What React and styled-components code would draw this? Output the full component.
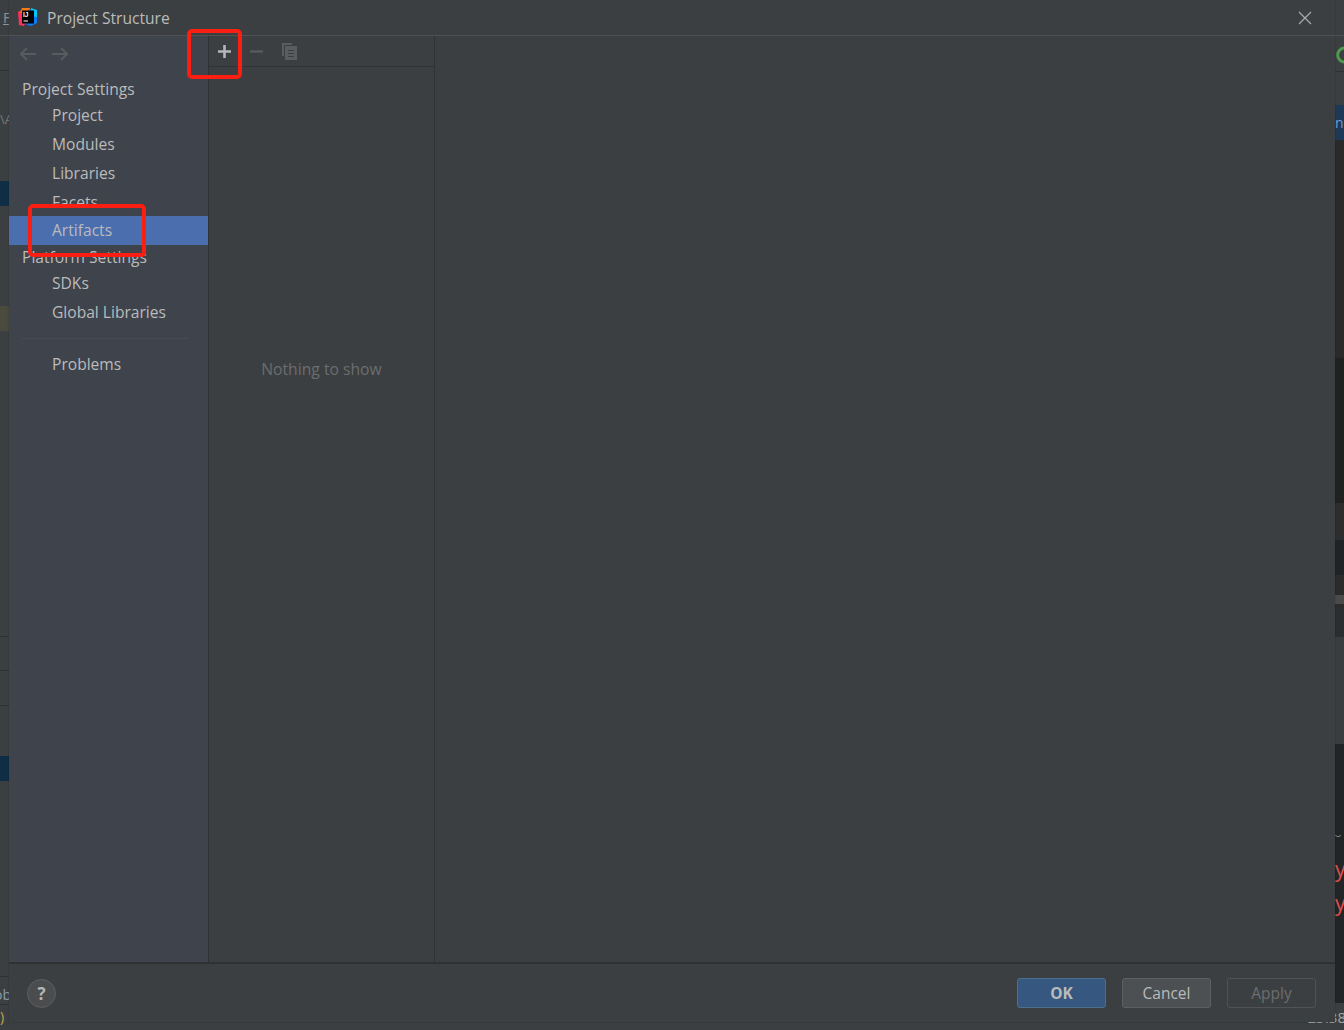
import React from "react";
import styled, { createGlobalStyle } from "styled-components";

const Global = createGlobalStyle`
  html, body { margin: 0; padding: 0; background: #3b3d3f; }
  body { font-family: "Open Sans", "Noto Sans", sans-serif; }
`;

const Page = styled.div`
  position: relative;
  width: 1344px;
  height: 1030px;
  overflow: hidden;
  display: grid;
  grid-template-columns: 9px 1326px 9px;
  grid-template-rows: 1022px 8px;
`;

/* IDE window peeking out round the dialog */
const Strip = styled.div`
  display: flex;
  flex-direction: column;
  overflow: hidden;
  background: #3c3f41;
`;

const Band = styled.div`
  flex: none;
  height: ${(p) => p.$h}px;
  background: ${(p) => p.$bg || "#3c3f41"};
  color: ${(p) => p.$color || "#a9b7c6"};
  font-size: ${(p) => p.$size || 14}px;
  line-height: ${(p) => p.$h}px;
  white-space: nowrap;
  text-indent: ${(p) => p.$indent || 0}px;
  text-decoration: ${(p) => (p.$underline ? "underline" : "none")};
`;

const BottomStrip = styled.div`
  grid-column: 1 / 4;
  position: relative;
  background: #3c3f41;
  overflow: visible;
`;

const Clock = styled.span`
  position: absolute;
  right: -2px;
  bottom: 5px;
  font-size: 15px;
  line-height: 15px;
  color: #a0a4a6;
`;

const BottomParen = styled.span`
  position: absolute;
  left: 0;
  bottom: 6px;
  font-size: 14px;
  line-height: 14px;
  color: #c8a050;
`;

const Dialog = styled.div`
  position: relative;
  z-index: 1;
  display: flex;
  flex-direction: column;
  background: #3c3f41;
  box-shadow: 0 0 2px rgba(0, 0, 0, 0.25);
`;

const TitleBar = styled.div`
  flex: none;
  height: 35px;
  display: flex;
  align-items: center;
  border-bottom: 1px solid #515151;
  color: #bbbbbb;
  font-size: 15.6px;
`;

const Logo = styled.svg`
  margin-left: 8px;
  margin-right: 9px;
  width: 21px;
  height: 21px;
`;

const Close = styled.svg`
  margin-left: auto;
  margin-right: 22px;
  width: 16px;
  height: 16px;
`;

const Body = styled.div`
  flex: 1;
  min-height: 0;
  display: flex;
`;

const Sidebar = styled.div`
  flex: none;
  width: 199px;
  background: #3e434c;
  border-right: 1px solid #323232;
  color: #bbbbbb;
  font-size: 15.6px;
`;

const Nav = styled.div`
  height: 39px;
  display: flex;
  align-items: center;
  gap: 14px;
  padding: 0 0 4px 10px;
  box-sizing: border-box;
`;

const Heading = styled.div`
  height: ${(p) => p.$h}px;
  line-height: ${(p) => p.$h}px;
  padding: ${(p) => p.$top || 0}px 0 0 13px;
  white-space: nowrap;
`;

const Item = styled.div`
  position: relative;
  height: ${(p) => p.$h || 29}px;
  line-height: ${(p) => p.$h || 29}px;
  padding-left: 43px;
  background: ${(p) => (p.$selected ? "#4b6eaf" : "transparent")};
  overflow: visible;
`;

const Divider = styled.div`
  height: 1px;
  margin: 11px 19px 11px 13px;
  background: #474b52;
`;

const ListPane = styled.div`
  flex: none;
  width: 225px;
  display: flex;
  flex-direction: column;
  border-right: 1px solid #323232;
`;

const ListTools = styled.div`
  flex: none;
  height: 31px;
  display: flex;
  align-items: center;
  gap: 17px;
  padding-left: 8px;
  box-sizing: border-box;
  border-bottom: 1px solid #323232;
`;

const Empty = styled.div`
  margin-top: 292px;
  text-align: center;
  color: #6b6d6f;
  font-size: 15.7px;
  line-height: 20px;
`;

const DetailPane = styled.div`
  flex: 1;
`;

const Footer = styled.div`
  flex: none;
  height: 60px;
  box-sizing: border-box;
  display: flex;
  align-items: center;
  border-top: 2px solid #2f3133;
  padding: 0 19px 0 18px;
`;

const Help = styled.div`
  width: 29px;
  height: 29px;
  box-sizing: border-box;
  border-radius: 50%;
  border: 1px solid #5c5f61;
  background: #4a4c4e;
  color: #b4b6b8;
  font-size: 17px;
  font-weight: 700;
  text-align: center;
  line-height: 27px;
`;

const Buttons = styled.div`
  margin-left: auto;
  display: flex;
  gap: 16px;
`;

const Button = styled.button`
  width: 89px;
  height: 30px;
  padding: 0;
  box-sizing: border-box;
  border-radius: 3px;
  font-family: inherit;
  font-size: 15.5px;
  border: 1px solid
    ${(p) => (p.$primary ? "#4c708c" : p.$disabled ? "#505254" : "#5e6060")};
  background: ${(p) =>
    p.$primary ? "#365880" : p.$disabled ? "transparent" : "#4c5052"};
  color: ${(p) =>
    p.$primary ? "#bbbbbb" : p.$disabled ? "#6b6d6f" : "#bbbbbb"};
  font-weight: ${(p) => (p.$primary ? 700 : 400)};
`;

const Callout = styled.div`
  position: absolute;
  z-index: 3;
  left: ${(p) => p.$x}px;
  top: ${(p) => p.$y}px;
  width: ${(p) => p.$w}px;
  height: ${(p) => p.$h}px;
  box-sizing: border-box;
  border: 4px solid #fb1e12;
  border-radius: 5px;
  pointer-events: none;
`;

const GreenRing = () => (
  <svg width="18" height="18" viewBox="0 0 18 18" fill="none" stroke="#4e9a4e" strokeWidth="3">
    <path d="M14 3.5A7 7 0 1 0 14 14.5" />
  </svg>
);

const leftBands = [
  { h: 35, text: "F", size: 14, color: "#8f9395", indent: 3, underline: true },
  { h: 1, bg: "#515151" },
  { h: 34 },
  { h: 1, bg: "#2f3133" },
  { h: 36 },
  { h: 24, text: "\\A", color: "#777a7c", size: 13 },
  { h: 50 },
  { h: 25, bg: "#0f2d45" },
  { h: 100 },
  { h: 25, bg: "#4a4a3e" },
  { h: 305 },
  { h: 1, bg: "#2f3133" },
  { h: 33 },
  { h: 1, bg: "#2f3133" },
  { h: 34 },
  { h: 1, bg: "#2f3133" },
  { h: 50 },
  { h: 25, bg: "#0f2d45" },
  { h: 195 },
  { h: 1, bg: "#2f3133" },
  { h: 9 },
  { h: 18, text: "ob", size: 14, color: "#8a9aa8", indent: -8 + 2 },
  { h: 1, bg: "#2f3133" },
];

const rightBands = [
  { h: 35 },
  { h: 1, bg: "#515151" },
  { h: 10 },
  { h: 20, icon: <GreenRing /> },
  { h: 5 },
  { h: 1, bg: "#2f3133" },
  { h: 33 },
  { h: 35, bg: "#1d3957", text: "n", color: "#6f9fd8" },
  { h: 218, bg: "#2a2a2a" },
  { h: 145, bg: "#1f2221" },
  { h: 37, bg: "#2d2d2d" },
  { h: 35, bg: "#1f2325" },
  { h: 20, bg: "#2b2b2b" },
  { h: 9, bg: "#4a4a4a" },
  { h: 3, bg: "#2b2b2b" },
  { h: 30, bg: "#2b2d2f" },
  { h: 107, bg: "#3a3c3e" },
  { h: 76, bg: "#232425" },
  { h: 20, bg: "#232425", text: "‿", size: 10, color: "#a9b7c6" },
  { h: 12, bg: "#232425" },
  { h: 34, bg: "#232425", text: "y", size: 21, color: "#e05050" },
  { h: 35, bg: "#232425", text: "y", size: 21, color: "#e05050" },
  { h: 82, bg: "#232425" },
  { h: 19 },
];

const IdeaLogo = () => (
  <Logo viewBox="0 0 21 21">
    <polygon points="1,5 8,1 12,8 7,19 2,18" fill="#fe315d" />
    <polygon points="5,1 13,1 13,6 3,6" fill="#f97a12" />
    <polygon points="12,2 20,4 20,16 14,19 8,17" fill="#087cfa" />
    <polygon points="14,1 20,3 20,10 14,9" fill="#07c3f2" />
    <rect x="5" y="3.5" width="12" height="13" fill="#000" />
    <text x="6" y="10" fontSize="6.5" fontWeight="700" fill="#fff" fontFamily="Liberation Sans, sans-serif">IJ</text>
    <rect x="6.5" y="13.5" width="4.5" height="1" fill="#fff" />
  </Logo>
);

const Arrow = ({ left }) => (
  <svg width="18" height="14" viewBox="0 0 18 14" fill="none" stroke="#595c5e" strokeWidth="2">
    {left ? (
      <path d="M17 7H2M8 1 2 7l6 6" />
    ) : (
      <path d="M1 7h15M10 1l6 6-6 6" />
    )}
  </svg>
);

const Plus = () => (
  <svg width="15" height="15" viewBox="0 0 15 15" fill="none" stroke="#b4b6b8" strokeWidth="2.6">
    <path d="M7.5 1v13M1 7.5h13" />
  </svg>
);

const Minus = () => (
  <svg width="15" height="15" viewBox="0 0 15 15" fill="none" stroke="#5a5d5f" strokeWidth="2.2">
    <path d="M1 7.5h13" />
  </svg>
);

const Copy = () => (
  <svg width="16" height="17" viewBox="0 0 16 17">
    <path d="M1 0h10v2H3v11H1z" fill="#5a5d5f" />
    <path d="M4 3h12v14H4z" fill="#5a5d5f" />
    <path d="M7 7.5h6M7 10.5h6M7 13.5h6" stroke="#3c3f41" strokeWidth="1" />
  </svg>
);

const renderBands = (bands) =>
  bands.map((b, i) => (
    <Band
      key={i}
      $h={b.h}
      $bg={b.bg}
      $color={b.color}
      $size={b.size}
      $indent={b.indent}
      $underline={b.underline}
    >
      {b.icon || b.text}
    </Band>
  ));

export default function App() {
  return (
    <Page>
      <Global />
      <Strip>{renderBands(leftBands)}</Strip>
      <Dialog>
        <TitleBar>
          <IdeaLogo />
          Project Structure
          <Close viewBox="0 0 16 16" fill="none" stroke="#a9abad" strokeWidth="1.2">
            <path d="M2 2l12 12M14 2 2 14" />
          </Close>
        </TitleBar>
        <Body>
          <Sidebar>
            <Nav>
              <Arrow left />
              <Arrow />
            </Nav>
            <Heading $h={24} $top={2}>Project Settings</Heading>
            <Item>Project</Item>
            <Item>Modules</Item>
            <Item>Libraries</Item>
            <Item $h={28}>Facets</Item>
            <Item $selected>Artifacts</Item>
            <Heading $h={24}>Platform Settings</Heading>
            <Item>SDKs</Item>
            <Item>Global Libraries</Item>
            <Divider />
            <Item>Problems</Item>
          </Sidebar>
          <ListPane>
            <ListTools>
              <Plus />
              <Minus />
              <Copy />
            </ListTools>
            <Empty>Nothing to show</Empty>
          </ListPane>
          <DetailPane />
        </Body>
        <Footer>
          <Help>?</Help>
          <Buttons>
            <Button $primary>OK</Button>
            <Button>Cancel</Button>
            <Button $disabled>Apply</Button>
          </Buttons>
        </Footer>
      </Dialog>
      <Strip>{renderBands(rightBands)}</Strip>
      <BottomStrip>
        <BottomParen>)</BottomParen>
        <Clock>23:38</Clock>
      </BottomStrip>
      <Callout $x={187} $y={29} $w={55} $h={50} />
      <Callout $x={28} $y={204} $w={118} $h={53} />
    </Page>
  );
}
